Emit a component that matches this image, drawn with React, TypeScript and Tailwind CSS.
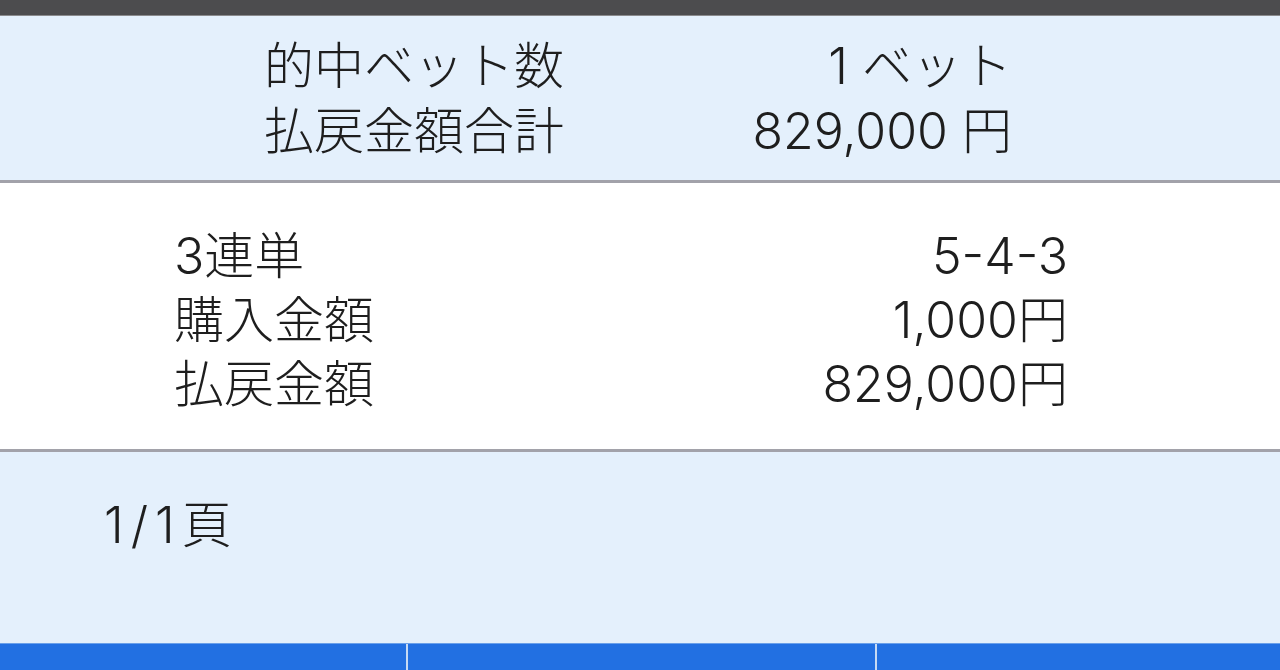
import React from 'react';

const font = { fontFamily: 'Inter, "Noto Sans CJK JP", "Noto Sans", sans-serif' };

const summary = [
  { label: '的中ベット数', value: '1 ベット' },
  { label: '払戻金額合計', value: '829,000 円' },
];

const detail = [
  { label: '3連単', value: '5-4-3' },
  { label: '購入金額', value: '1,000円' },
  { label: '払戻金額', value: '829,000円' },
];

export default function App() {
  return (
    <div className="w-[1280px] h-[670px] overflow-hidden flex flex-col bg-[#e4f0fc] text-[#1e1e1e]" style={font}>
      {/* top bar */}
      <div className="h-[16px] shrink-0 bg-[#4c4c4e] border-b border-[#8a8a8c]" />

      {/* summary */}
      <div className="h-[167px] shrink-0 bg-[#e4f0fc] pt-[18px] border-b-[3px] border-[#a2a2aa]">
        <div className="ml-[264px] w-[748px] text-[50px] leading-[65px] font-light">
          {summary.map((r) => (
            <div key={r.label} className="flex justify-between">
              <span>{r.label}</span>
              <span>{r.value}</span>
            </div>
          ))}
        </div>
      </div>

      {/* detail */}
      <div className="h-[269px] shrink-0 bg-white pt-[41px] border-b-[3px] border-[#a2a2aa]">
        <div className="ml-[174px] w-[894px] text-[50px] leading-[64px] font-light">
          {detail.map((r) => (
            <div key={r.label} className="flex justify-between">
              <span>{r.label}</span>
              <span>{r.value}</span>
            </div>
          ))}
        </div>
      </div>

      {/* pager */}
      <div className="flex-1 bg-[#e4f0fc] pt-[41px] pl-[104px] text-[50px] leading-[64px] font-light tracking-[7px]">
        1/1頁
      </div>

      {/* bottom buttons */}
      <div className="h-[27px] shrink-0 flex bg-[#2270e2] border-t border-[#6aa0ea]">
        <div className="w-[406px]" />
        <div className="w-[2px] bg-[#c6daf4]" />
        <div className="w-[467px]" />
        <div className="w-[2px] bg-[#c6daf4]" />
        <div className="flex-1" />
      </div>
    </div>
  );
}
